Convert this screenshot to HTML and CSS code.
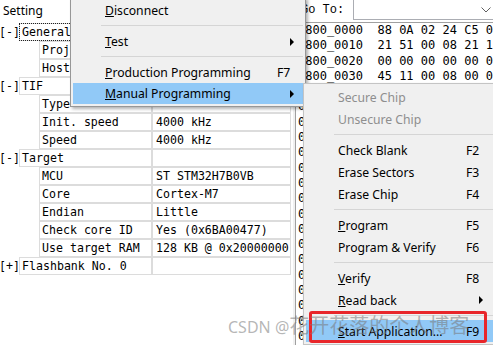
FILE: index.html
```html
<!DOCTYPE html>
<html>
<head>
<meta charset="utf-8">
<link rel="stylesheet" href="styles.css">
</head>
<body>
<div class="app">
  <div class="left">
    <div class="hdr">Setting</div>
    <div class="row grp"><span class="exp">[-]</span><div class="cell name focus">General</div><div class="cell val"></div></div>
    <div class="row"><div class="ind"></div><div class="cell name">Project</div><div class="cell val">New Project</div></div>
    <div class="row"><div class="ind"></div><div class="cell name">Host</div><div class="cell val">USB</div></div>
    <div class="row grp"><span class="exp">[-]</span><div class="cell name">TIF</div><div class="cell val"></div></div>
    <div class="row"><div class="ind"></div><div class="cell name">Type</div><div class="cell val"></div></div>
    <div class="row"><div class="ind"></div><div class="cell name">Init. speed</div><div class="cell val">4000 kHz</div></div>
    <div class="row"><div class="ind"></div><div class="cell name">Speed</div><div class="cell val">4000 kHz</div></div>
    <div class="row grp"><span class="exp">[-]</span><div class="cell name">Target</div><div class="cell val"></div></div>
    <div class="row"><div class="ind"></div><div class="cell name">MCU</div><div class="cell val">ST STM32H7B0VB</div></div>
    <div class="row"><div class="ind"></div><div class="cell name">Core</div><div class="cell val">Cortex-M7</div></div>
    <div class="row"><div class="ind"></div><div class="cell name">Endian</div><div class="cell val">Little</div></div>
    <div class="row"><div class="ind"></div><div class="cell name">Check core ID</div><div class="cell val">Yes (0x6BA00477)</div></div>
    <div class="row"><div class="ind"></div><div class="cell name">Use target RAM</div><div class="cell val">128 KB @ 0x20000000</div></div>
    <div class="row grp"><span class="exp">[+]</span><div class="cell name">Flashbank No. 0</div><div class="cell val"></div></div>
  </div>
  <div class="split"></div>
  <div class="right">
    <div class="goto">
      <span class="glbl">Go To:</span>
      <div class="combo"><svg class="chev" width="10" height="6" viewBox="0 0 10 6"><polyline points="0.5,0.5 5,5 9.5,0.5" fill="none" stroke="#606060" stroke-width="1"/></svg></div>
    </div>
<div class="hex">0800_0000  88 0A 02 24 C5 02 00 08 C1 02
0800_0010  21 51 00 08 21 11 00 08 00 00
0800_0020  00 00 00 00 00 00 00 00 00 00
0800_0030  45 11 00 08 00 00 00 00 47 11
0800_0040  49 11 00 08 E1 02 00 08 E1 02
0800_0050  E1 02 00 08 E1 02 00 08 E1 02
0800_0060  E1 02 00 08 E1 02 00 08 E1 02
0800_0070  E1 02 00 08 E1 02 00 08 E1 02
0800_0080  E1 02 00 08 E1 02 00 08 E1 02
0800_0090  E1 02 00 08 E1 02 00 08 E1 02
0800_00A0  E1 02 00 08 E1 02 00 08 E1 02
0800_00B0  E1 02 00 08 E1 02 00 08 E1 02
0800_00C0  E1 02 00 08 E1 02 00 08 E1 02
0800_00D0  E1 02 00 08 E1 02 00 08 E1 02
0800_00E0  E1 02 00 08 E1 02 00 08 E1 02
0800_00F0  E1 02 00 08 E1 02 00 08 E1 02
0800_0100  E1 02 00 08 E1 02 00 08 E1 02
0800_0110  E1 02 00 08 E1 02 00 08 E1 02
0800_0120  E1 02 00 08 E1 02 00 08 E1 02
0800_0130  E1 02 00 08 E1 02 00 08 E1 02
0800_0140  E1 02 00 08 E1 02 00 08 E1 02</div>
  </div>
</div>

<div class="menu main">
  <div class="mi"><span class="lbl"><u>D</u>isconnect</span></div>
  <div class="sep"></div>
  <div class="mi"><span class="lbl"><u>T</u>est</span><span class="arr"></span></div>
  <div class="sep"></div>
  <div class="mi"><span class="lbl"><u>P</u>roduction Programming</span><span class="key">F7</span></div>
  <div class="mi hl"><span class="lbl"><u>M</u>anual Programming</span><span class="arr"></span></div>
</div>

<div class="menu sub">
  <div class="mi dis"><span class="lbl">Secure Chip</span></div>
  <div class="mi dis"><span class="lbl">Unsecure Chip</span></div>
  <div class="sep"></div>
  <div class="mi"><span class="lbl">Check Blank</span><span class="key">F2</span></div>
  <div class="mi"><span class="lbl">Erase Sectors</span><span class="key">F3</span></div>
  <div class="mi"><span class="lbl">Erase Chip</span><span class="key">F4</span></div>
  <div class="sep"></div>
  <div class="mi"><span class="lbl"><u>P</u>rogram</span><span class="key">F5</span></div>
  <div class="mi"><span class="lbl">Program &amp; Verify</span><span class="key">F6</span></div>
  <div class="sep"></div>
  <div class="mi"><span class="lbl"><u>V</u>erify</span><span class="key">F8</span></div>
  <div class="mi"><span class="lbl"><u>R</u>ead back</span><span class="arr"></span></div>
  <div class="sep"></div>
  <div class="mi hl"><span class="lbl"><u>S</u>tart Application...</span><span class="key">F9</span></div>
</div>

<div class="redbox"></div>
<div class="wm"><span class="wl">CSDN @</span><span class="wc">花开花落的个人博客</span></div>
</body>
</html>
```
FILE: styles.css
```css
* { box-sizing: border-box; margin: 0; padding: 0; }
html, body { width: 493px; height: 345px; overflow: hidden; background: #fff; }
body {
  position: relative;
  font-family: "DejaVu Sans Mono", monospace;
  font-size: 11.6px;
  color: #000;
}
.app { display: flex; height: 345px; }

/* left property tree */
.left { width: 293px; flex: none; }
.hdr {
  height: 23px;
  padding-left: 3px;
  font-family: "Noto Sans", sans-serif;
  font-size: 12px;
  line-height: 21px;
}
.row { display: flex; height: 18px; }
.exp { width: 19px; flex: none; line-height: 18px; text-indent: -1px; white-space: pre; }
.ind { width: 39px; flex: none; }
.cell {
  flex: none;
  height: 18px;
  border: 1px solid #dcdcdc;
  line-height: 16px;
  white-space: nowrap;
  overflow: hidden;
}
.name { padding-left: 2px; width: 113px; }
.grp .name { width: 133px; }
.val { width: 139px; padding-left: 3px; }
.focus { outline: 1px dotted #222; outline-offset: -1px; }

.split { width: 3px; flex: none; background: #f0f0f0; border-right: 1px solid #a0a0a0; }

/* right hex view */
.right { flex: 1; min-width: 0; overflow: hidden; }
.goto {
  height: 23px;
  display: flex;
  align-items: flex-start;
  padding-left: 5px;
  border-bottom: 1px solid #a0a0a0;
}
.glbl { font-family: "Liberation Mono", monospace; font-size: 12px; line-height: 20px; white-space: pre; }
.combo {
  margin-left: 9px;
  margin-top: -1px;
  width: 160px;
  flex: none;
  height: 21px;
  background: #fff;
  border: 1px solid #abadb3;
  display: flex;
  align-items: center;
}
.chev { margin-left: 127px; }
.hex {
  padding-left: 2px;
  font-family: "DejaVu Sans Mono", monospace;
  font-size: 12px;
  line-height: 15.3px;
  white-space: pre;
}

/* menus */
.menu {
  position: absolute;
  background: #f0f0f0;
  border: 1px solid #979797;
  padding: 2px;
  box-shadow: 2px 2px 3px rgba(0,0,0,0.3);
  font-family: "Noto Sans", sans-serif;
  font-size: 12.2px;
  color: #000;
}
.main { left: 70px; top: -3px; width: 236px; }
.sub { left: 303px; top: 83px; width: 200px; border-color: #c4c4c4; }
.mi { display: flex; align-items: center; white-space: nowrap; }
.main .mi { height: 21px; padding-left: 32px; }
.main .lbl { width: 172px; flex: none; }
.sub .mi { height: 22px; padding-left: 32px; }
.sub .lbl { width: 128px; flex: none; }
.main .sep { margin: 4px 0 5px 28px; border-top: 1px solid #d5d5d5; }
.sub .sep { margin: 4px 0 4px 28px; border-top: 1px solid #d5d5d5; }
.hl { background: #91c9f7; }
.dis { color: #8e8e8e; }
.arr {
  width: 0; height: 0;
  margin-left: 13px;
  border-left: 4px solid #000;
  border-top: 4px solid transparent;
  border-bottom: 4px solid transparent;
}
u { text-underline-offset: 1px; }

.redbox {
  position: absolute;
  left: 309px; top: 311px;
  width: 178px; height: 32px;
  border: 3px solid #e8262a;
  border-radius: 3px;
}
.wm {
  position: absolute;
  left: 228px; top: 310px;
  white-space: nowrap;
  color: rgba(120,120,120,0.55);
  font-family: "Noto Sans", "Noto Sans CJK SC", sans-serif;
}
.wl { font-size: 16px; }
.wc { font-family: "Noto Sans CJK SC", sans-serif; font-size: 20px; }
```
